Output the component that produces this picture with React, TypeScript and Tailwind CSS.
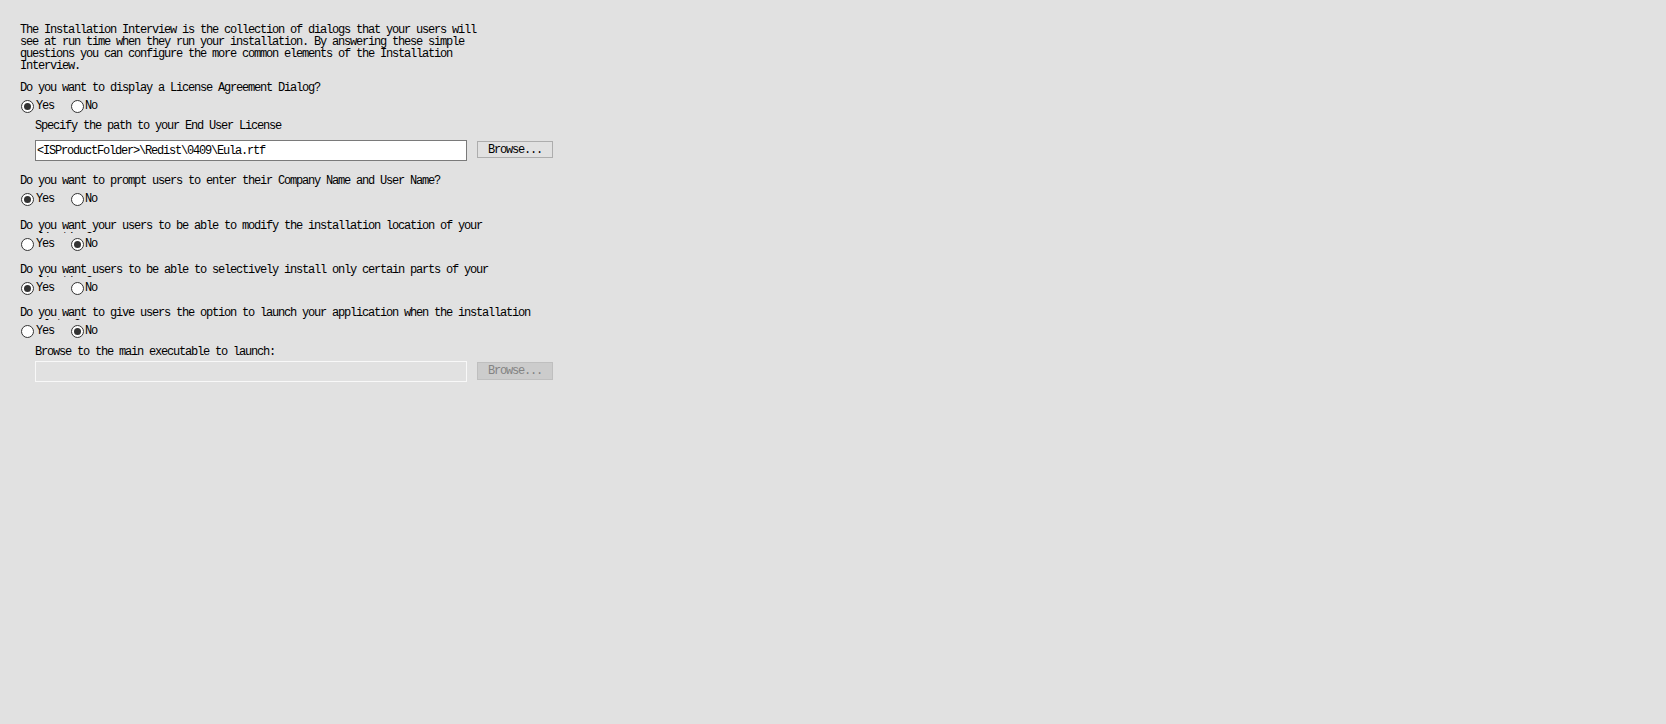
import React from "react";

function Radio({ checked }: { checked?: boolean }) {
  return (
    <span className="flex h-[13px] w-[13px] shrink-0 items-center justify-center rounded-full border border-[#333333] bg-white">
      {checked && <span className="h-[7px] w-[7px] rounded-full bg-[#333333]" />}
    </span>
  );
}

function YesNo({ yes }: { yes: boolean }) {
  return (
    <div className="flex h-[16px] items-center pl-px">
      <span className="flex w-[50px] items-center">
        <Radio checked={yes} />
        <span className="ml-[2px]">Yes</span>
      </span>
      <span className="flex items-center">
        <Radio checked={!yes} />
        <span className="ml-px">No</span>
      </span>
    </div>
  );
}

function Question({ lines, yes, className = "" }: { lines: string[]; yes: boolean; className?: string }) {
  return (
    <div className={className}>
      <div className="h-[16px]">
        <div className="h-[13px] overflow-hidden">
          {lines.map((l, i) => (
            <div key={i} className="h-[12px] whitespace-pre">
              {l}
            </div>
          ))}
        </div>
      </div>
      <YesNo yes={yes} />
    </div>
  );
}

export default function App() {
  return (
    <div className="min-h-screen w-full bg-[#e1e1e1] font-['Liberation_Mono',monospace] text-[12px] leading-[12px] tracking-[-1.2px] text-black">
      <div className="pl-[20px] pt-[24px]">
        <div>
          <div className="h-[12px] whitespace-pre">The Installation Interview is the collection of dialogs that your users will</div>
          <div className="h-[12px] whitespace-pre">see at run time when they run your installation. By answering these simple</div>
          <div className="h-[12px] whitespace-pre">questions you can configure the more common elements of the Installation</div>
          <div className="h-[12px] whitespace-pre">Interview.</div>
        </div>

        <Question className="mt-[10px]" lines={["Do you want to display a License Agreement Dialog?"]} yes={true} />

        <div className="ml-[15px] mt-[6px] h-[12px] whitespace-pre">Specify the path to your End User License</div>
        <div className="ml-[15px] mt-[8px] flex items-start gap-[10px]">
          <div className="flex h-[21px] w-[432px] items-center border border-[#7a7a7a] bg-white pl-[1px]">
            <span className="whitespace-pre">&lt;ISProductFolder&gt;\Redist\0409\Eula.rtf</span>
          </div>
          <div className="mt-px flex h-[17px] w-[76px] items-center justify-center border border-[#adadad] bg-[#e1e1e1]">
            Browse...
          </div>
        </div>

        <Question className="mt-[14px]" lines={["Do you want to prompt users to enter their Company Name and User Name?"]} yes={true} />
        <Question
          className="mt-[13px]"
          lines={["Do you want your users to be able to modify the installation location of your", "application?"]}
          yes={false}
        />
        <Question
          className="mt-[12px]"
          lines={["Do you want users to be able to selectively install only certain parts of your", "application?"]}
          yes={true}
        />
        <Question
          className="mt-[11px]"
          lines={["Do you want to give users the option to launch your application when the installation", "completes?"]}
          yes={false}
        />

        <div className="ml-[15px] mt-[7px] h-[12px] whitespace-pre">Browse to the main executable to launch:</div>
        <div className="ml-[15px] mt-[3px] flex items-start gap-[10px]">
          <div className="h-[21px] w-[432px] border border-[#f8f8f8] bg-[#e1e1e1]" />
          <div className="mt-px flex h-[18px] w-[76px] items-center justify-center border border-[#bfbfbf] bg-[#cccccc] text-[#838383]">
            Browse...
          </div>
        </div>
      </div>
    </div>
  );
}
